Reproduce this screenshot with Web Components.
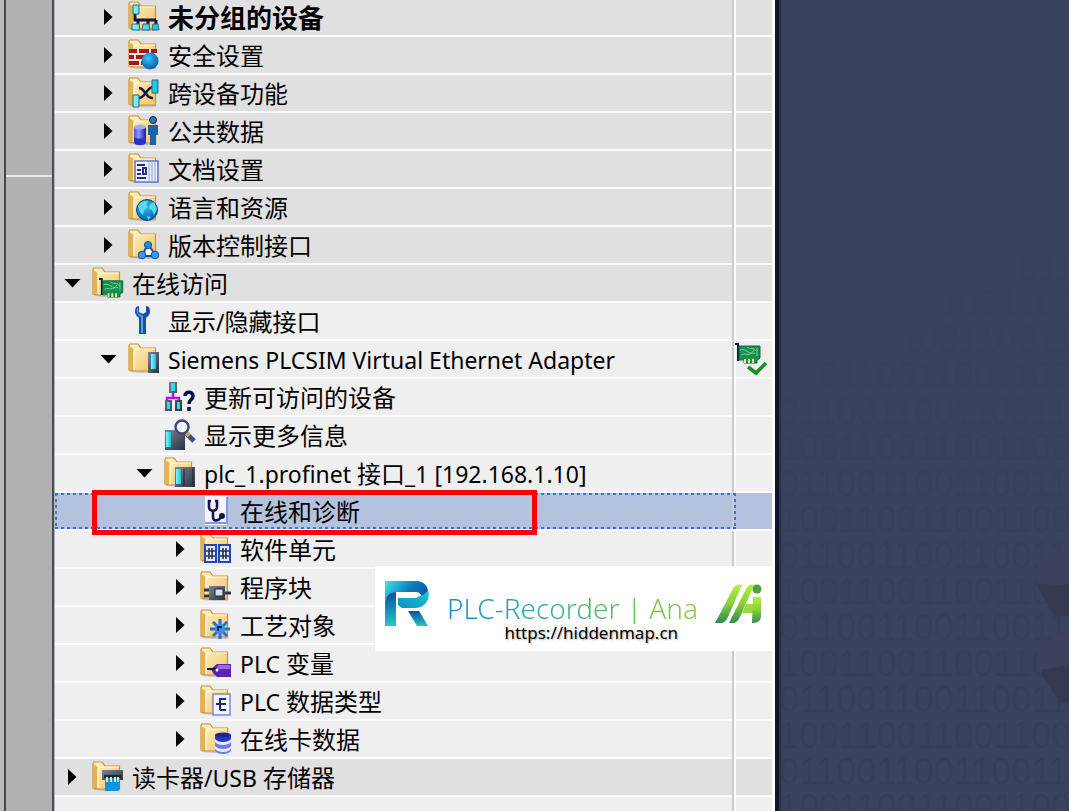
<!DOCTYPE html>
<html lang="zh-CN">
<head>
<meta charset="utf-8">
<title>项目树</title>
<style>
  body {
    margin: 0;
    font-family: "Noto Sans CJK SC", sans-serif;
    color: #000;
  }
</style>
</head>
<body>
<work-bench>
  <side-rail slot="rail"></side-rail>
  <project-tree slot="tree">
    <tree-row level="1" icon="devices" toggle="closed" group strong>未分组的设备</tree-row>
    <tree-row level="1" icon="security" toggle="closed" group>安全设置</tree-row>
    <tree-row level="1" icon="cross" toggle="closed" group>跨设备功能</tree-row>
    <tree-row level="1" icon="common" toggle="closed" group>公共数据</tree-row>
    <tree-row level="1" icon="docs" toggle="closed" group>文档设置</tree-row>
    <tree-row level="1" icon="globe" toggle="closed" group>语言和资源</tree-row>
    <tree-row level="1" icon="version" toggle="closed" group>版本控制接口</tree-row>
    <tree-row level="0" icon="online" toggle="open" group>在线访问</tree-row>
    <tree-row level="1" icon="wrench">显示<span>/</span>隐藏接口</tree-row>
    <tree-row level="1" icon="adapter" toggle="open"><span>Siemens PLCSIM Virtual Ethernet Adapter</span><tree-icon slot="status" name="adapter-ok"></tree-icon></tree-row>
    <tree-row level="2" icon="refresh">更新可访问的设备</tree-row>
    <tree-row level="2" icon="more">显示更多信息</tree-row>
    <tree-row level="2" icon="plc" toggle="open"><span>plc_1.profinet </span>接口<span>_1 [192.168.1.10]</span></tree-row>
    <tree-row level="3" icon="diagnose" selected marked>在线和诊断</tree-row>
    <tree-row level="3" icon="units" toggle="closed">软件单元</tree-row>
    <tree-row level="3" icon="blocks" toggle="closed">程序块</tree-row>
    <tree-row level="3" icon="tech" toggle="closed">工艺对象</tree-row>
    <tree-row level="3" icon="tags" toggle="closed"><span>PLC </span>变量</tree-row>
    <tree-row level="3" icon="types" toggle="closed"><span>PLC </span>数据类型</tree-row>
    <tree-row level="3" icon="carddata" toggle="closed">在线卡数据</tree-row>
    <tree-row level="0" icon="reader" toggle="closed" group>读卡器<span>/USB </span>存储器</tree-row>
    <tree-row level="0"></tree-row>
    <brand-badge slot="overlay" href="https://hiddenmap.cn">PLC-Recorder | Ana</brand-badge>
  </project-tree>
  <binary-backdrop slot="canvas"></binary-backdrop>
</work-bench>

<script>
const DEFS = `
  <defs>
    <linearGradient id="paper" x1="0" y1="0" x2="1" y2="1">
      <stop offset="0" stop-color="#fff3cb"/><stop offset="1" stop-color="#f0c561"/>
    </linearGradient>
    <linearGradient id="cyan" x1="0" y1="0" x2="1" y2="0">
      <stop offset="0" stop-color="#7ff6ff"/><stop offset="1" stop-color="#10c4dc"/>
    </linearGradient>
    <linearGradient id="steel" x1="0" y1="0" x2="1" y2="1">
      <stop offset="0" stop-color="#7b8899"/><stop offset="1" stop-color="#27313f"/>
    </linearGradient>
    <radialGradient id="ball" cx=".4" cy=".35" r=".7">
      <stop offset="0" stop-color="#35c3f5"/><stop offset="1" stop-color="#0559a8"/>
    </radialGradient>
    <linearGradient id="drum" x1="0" y1="0" x2="1" y2="0">
      <stop offset="0" stop-color="#4c58e8"/><stop offset=".4" stop-color="#8b98ff"/><stop offset="1" stop-color="#1414a8"/>
    </linearGradient>
  </defs>`;

const FOLDER = `
  <path d="M2 29V3l1-1h8l3 4h14v24H12z" fill="#8a93a8" opacity=".4"/>
  <path d="M1 27V2.500l1-1.500h8l3 4h14.500V28H6z" fill="url(#paper)" stroke="#c9922e" stroke-width="1.200"/>
  <path d="M1.500 27V3l4 3v21z" fill="#e6b24a"/>
  <path d="M6 27V8l2-2h19" fill="none" stroke="#fffbe8" stroke-width="1.200"/>`;

const NIC = `
  <path d="M0 1h3v17" fill="none" stroke="#11104f" stroke-width="2"/>
  <path d="M4 3h21v12l-3 2v3H9v-3H4z" fill="#149150" stroke="#0b6a3c"/>
  <path d="M5 7c7-2 8 5 15 3M6 12c5-3 8 3 13-5M12 4c3 3 7 0 9 4M22 5v8" fill="none" stroke="#7ed09a"/>
  <path d="M10 16v4M14 16v4M18 16v4" stroke="#f5e29a" stroke-width="2"/>`;

const ICONS = {
  devices: FOLDER + `
    <path d="M7 9v10h21M10 19v5M20 19v5M28 19v5" fill="none" stroke="#101448" stroke-width="3"/>
    <path d="M5 4h6v9H5zM4 23h7l1 6H4zM15 23h6l1 6h-8zM25 23h5l1 6h-7z" fill="url(#cyan)" stroke="#39617d"/>`,
  security: FOLDER + `
    <path d="M1 10h28v17H1z" fill="#f5ebe3"/>
    <path d="M1 10h8v4H1zM11 10h10v4H11zM23 10h6v4h-6zM1 16h5v4H1zM8 16h10v4H8zM1 22h10v4H1zM13 22h6v4h-6z" fill="#a81818"/>
    <circle cx="22" cy="22" r="8.500" fill="url(#ball)"/>`,
  cross: FOLDER + `
    <path d="M11 11c6 0 7 11 14 10M11 21c6 0 8-11 14-11" fill="none" stroke="#16144f" stroke-width="2.600"/>
    <path d="M5 18h6v12H5zM24 3h6v13h-6z" fill="url(#cyan)" stroke="#39617d"/>`,
  common: FOLDER + `
    <path d="M6 12v16c2 3 10 3 12 0V12z" fill="#2735cf"/>
    <path d="M6 12v10c2 2 10 2 12 0V12z" fill="url(#drum)"/>
    <ellipse cx="12" cy="12" rx="6" ry="2.500" fill="#a2acff"/>
    <circle cx="25" cy="5" r="3.500" fill="#2f78b8" stroke="#17175a"/>
    <path d="M20 10h10v10h-2v10h-6V20h-2z" fill="#1e629f"/>`,
  docs: FOLDER + `
    <path d="M7 8h23v21H7z" fill="#eef1ff" stroke="#6674cc" stroke-width="1.600"/>
    <path d="M9 12h8M9 17h4M9 21h4M9 25h9M15 15h3v6h-3z" stroke="#23307e" stroke-width="2" fill="none"/>
    <path d="M21 9v20M24 9v20M27 9v20" stroke="#8a98d6"/>`,
  globe: FOLDER + `
    <circle cx="19" cy="19" r="10.500" fill="url(#ball)" stroke="#0b4387"/>
    <path d="M10 15c4-6 8-5 10-5l-2 4 2 2-4 3-1 5-3-3zM22 13l4-2 3 7-3 6-2-5-3-1zM19 25l4 1-3 3z" fill="#55dcea"/>`,
  version: FOLDER + `
    <path d="M20 15l-6 12h14z" fill="#fff" stroke="#1750a0" stroke-width="2"/>
    <circle cx="20" cy="16" r="3.600" fill="#2d86dd" stroke="#13509e"/>
    <circle cx="14" cy="26" r="3.800" fill="#3d98ea" stroke="#13509e"/>
    <circle cx="27" cy="26" r="3.800" fill="#3d98ea" stroke="#13509e"/>`,
  online: FOLDER + `<g transform="translate(7 11) scale(.95)">${NIC}</g>`,
  wrench: `
    <path d="M8 2c-2 5-1 8 3 11v16h7V13c4-3 5-6 3-11l-3-1v6l-3 2-4-2V1z" fill="#1550a4"/>
    <path d="M9 3c-1 4 0 7 4 9v16h2V11l-5-3V3z" fill="#5f9be0"/>`,
  adapter: FOLDER + `
    <path d="M20 9h11v21H20z" fill="url(#steel)"/>
    <path d="M23 11h5v15h-5z" fill="url(#cyan)"/>`,
  refresh: `
    <path d="M9 11v5M3 22v-5h12v5" fill="none" stroke="#b512dd" stroke-width="2.500"/>
    <path d="M5 1h8v11H5zM1 19h7v11H1zM11 19h7v11h-7z" fill="url(#steel)"/>
    <path d="M7 2h4v8H7zM3 21h3v7H3zM13 21h3v7h-3z" fill="#1fe0ea"/>
    <path d="M21 15c0-5 8-5 8 0 0 4-4 3-4 8M25 26v4" fill="none" stroke="#0c0b4e" stroke-width="3.500"/>`,
  more: `
    <path d="M1 11h20v20H1z" fill="url(#steel)"/>
    <path d="M2 13h5v15H2z" fill="url(#cyan)"/>
    <path d="M22 14l8 8" stroke="#394f8c" stroke-width="5"/>
    <path d="M21 12l4 5" stroke="#eaa528" stroke-width="4"/>
    <circle cx="18" cy="8" r="6.500" fill="#f3f5ff" stroke="#434578" stroke-width="2.400"/>`,
  plc: FOLDER + `
    <path d="M11 10h20v20H11z" fill="url(#steel)"/>
    <path d="M12 12h5v15h-5z" fill="url(#cyan)"/>
    <path d="M20 12v17M29 11v17" stroke="#1a2230"/>`,
  diagnose: `
    <path d="M5 1h22v29H5z" fill="#f4f7ff"/>
    <path d="M5 28h22V2" fill="none" stroke="#7d99ec" stroke-width="2"/>
    <path d="M11 6H9v6c0 5 8 5 8 0V6h-2M13 16v6c0 5 6 4 8 0" fill="none" stroke="#15124f" stroke-width="2.600"/>
    <circle cx="22" cy="21" r="3" fill="#15124f"/>`,
  units: FOLDER + `
    <path d="M5 12h11v17H5zM19 12h11v17H19z" fill="#e3e8fb" stroke="#2544bd" stroke-width="2"/>
    <path d="M9 15v11M12 15v11M23 15v11M26 15v11M6 18h9M6 23h9M20 18h9M20 23h9" stroke="#29334f" stroke-width="1.600"/>`,
  blocks: FOLDER + `
    <path d="M4 19h6M4 25h6M23 22h8" stroke="#2a3547" stroke-width="3"/>
    <path d="M9 15h16v14H9z" fill="url(#steel)"/>
    <path d="M15 18h8v7h-8z" fill="#d9dfe8" stroke="#1d2637"/>`,
  tech: FOLDER + `
    <path d="M20 10v20M10 20h20M13 13l14 14M27 13L13 27" stroke="#1e6fe0" stroke-width="3"/>
    <circle cx="20" cy="20" r="5" fill="#3c8ff2"/>
    <path d="M18 22v-4h4" fill="none" stroke="#10204f" stroke-width="2"/>`,
  tags: FOLDER + `
    <path d="M11 22l6-5h14v13H17l-4-4z" fill="#5b22b5"/>
    <path d="M18 18h12v4H17z" fill="#9a6ae6"/>
    <path d="M7 22h9" stroke="#201050" stroke-width="2"/>
    <circle cx="17" cy="23" r="1.500" fill="#fff"/>`,
  types: FOLDER + `
    <path d="M13 9h17v21H13z" fill="#f4f6ff" stroke="#7788d8" stroke-width="1.500"/>
    <path d="M16 19h4M20 13v12M20 14h6M20 19h6M20 25h6" fill="none" stroke="#20286a" stroke-width="2"/>`,
  carddata: FOLDER + `
    <path d="M15 13v15c3 4 13 4 16 0V13z" fill="#e9ecff"/>
    <path d="M15 12v4c3 4 13 4 16 0v-4z" fill="#2638c4"/>
    <path d="M15 19c3 4 13 4 16 0v4c-3 4-13 4-16 0zM15 26c3 4 13 4 16 0v2c-3 4-13 4-16 0z" fill="#6b78f0"/>
    <ellipse cx="23" cy="12" rx="8" ry="2.500" fill="#1b2494"/>`,
  reader: FOLDER + `
    <path d="M10 9h21v10H10z" fill="url(#steel)"/>
    <path d="M12 14h17v3H12z" fill="#1c2535"/>
    <path d="M13 17h15v11l-2 2H13z" fill="#0c94dc"/>
    <path d="M15 16v5M19 16v5M23 16v5M26 16v5" stroke="#f3e4a4" stroke-width="2"/>`,
  'adapter-ok': `
    <g transform="translate(-1 2)">${NIC}</g>
    <path d="M12 26l8 6 10-10" fill="none" stroke="#169022" stroke-width="3.600"/>`
};

class TreeIcon extends HTMLElement {
  constructor() {
    super();
    this.attachShadow({ mode: 'open' });
  }

  connectedCallback() {
    this.shadowRoot.innerHTML = `
      <style>
        :host { display: block; width: 32px; height: 32px; }
        svg { display: block; width: 32px; height: 32px; overflow: visible; }
      </style>
      <svg viewBox="0 0 32 32" aria-hidden="true">${DEFS}${ICONS[this.getAttribute('name')] || ''}</svg>
    `;
  }
}

class TreeRow extends HTMLElement {
  constructor() {
    super();
    this.attachShadow({ mode: 'open' });
  }

  connectedCallback() {
    this.setAttribute('role', 'treeitem');
    this.render();
    const button = this.shadowRoot.querySelector('button');
    if (button) {
      button.addEventListener('click', () => {
        const open = this.getAttribute('toggle') === 'open';
        this.setAttribute('toggle', open ? 'closed' : 'open');
        button.className = this.getAttribute('toggle');
      });
    }
  }

  render() {
    const toggle = this.getAttribute('toggle');
    const icon = this.getAttribute('icon');
    this.shadowRoot.innerHTML = `
      <style>
        :host {
          --fill: #efefef;
          display: grid;
          grid-template-columns: minmax(0, 1fr) 4px 36px;
          position: relative;
          height: 38px;
          background: #fcfcfc;
          font-size: 24px;
          line-height: 36px;
        }
        :host([group]) { --fill: #e0e0e0; }
        :host([selected]) { --fill: #b4c2de; z-index: 1; }
        :host([strong]) { font-size: 26px; font-weight: 700; }
        .main, .status {
          height: 36px;
          background: var(--fill);
        }
        .main {
          display: grid;
          grid-template-columns: 16px 32px 1fr;
          column-gap: 8px;
          align-items: center;
          padding-left: calc(9px + var(--level) * 36px);
        }
        .main tree-icon { margin-left: 4px; }
        .label {
          height: 36px;
          padding-left: 4px;
          white-space: pre;
        }
        ::slotted(span) {
          font-family: "Noto Sans", sans-serif;
          font-size: 23px;
        }
        .line { border-left: 2px solid #cbcbcb; }
        :host([selected]) .line { background: var(--fill); height: 36px; }
        button {
          display: grid;
          place-items: center;
          width: 16px;
          height: 24px;
          padding: 0;
          border: 0;
          background: none;
        }
        button::before {
          content: "";
          width: 9px;
          height: 17px;
          background: #000;
          clip-path: polygon(0 0, 100% 50%, 0 100%);
        }
        button.open::before {
          width: 17px;
          height: 9px;
          clip-path: polygon(0 0, 100% 0, 50% 100%);
        }
        .focus {
          position: absolute;
          inset: 0 36px 2px 0;
          background:
            repeating-linear-gradient(90deg, #3f70d6 0 3px, transparent 3px 6px) top / 100% 2px no-repeat,
            repeating-linear-gradient(90deg, #3f70d6 0 3px, transparent 3px 6px) bottom / 100% 2px no-repeat,
            repeating-linear-gradient(#3f70d6 0 3px, transparent 3px 6px) left / 2px 100% no-repeat,
            repeating-linear-gradient(#3f70d6 0 3px, transparent 3px 6px) right / 2px 100% no-repeat;
        }
        .mark {
          position: absolute;
          left: 37px;
          top: -3px;
          box-sizing: border-box;
          width: 445px;
          height: 45px;
          border: 5px solid #fb0007;
        }
      </style>
      <div class="main" style="--level: ${this.getAttribute('level')}">
        ${toggle ? `<button class="${toggle}" aria-label="展开或折叠"></button>` : '<i></i>'}
        ${icon ? `<tree-icon name="${icon}"></tree-icon>` : '<i></i>'}
        <div class="label"><slot></slot></div>
      </div>
      <div class="line"></div>
      <div class="status"><slot name="status"></slot></div>
      ${this.hasAttribute('selected') ? '<div class="focus"></div>' : ''}
      ${this.hasAttribute('marked') ? '<div class="mark"></div>' : ''}
    `;
  }
}

class ProjectTree extends HTMLElement {
  constructor() {
    super();
    this.attachShadow({ mode: 'open' });
  }

  connectedCallback() {
    this.shadowRoot.innerHTML = `
      <style>
        :host {
          display: block;
          position: relative;
          overflow: hidden;
          padding-right: 3px;
          background: #fcfcfc;
        }
        .rows { margin-top: -1px; }
        ::slotted(brand-badge) {
          position: absolute;
          top: 566px;
          right: 3px;
          z-index: 2;
        }
      </style>
      <div class="rows" role="tree"><slot></slot></div>
      <slot name="overlay"></slot>
    `;
  }
}

class BrandBadge extends HTMLElement {
  constructor() {
    super();
    this.attachShadow({ mode: 'open' });
  }

  connectedCallback() {
    const href = this.getAttribute('href');
    this.shadowRoot.innerHTML = `
      <style>
        :host {
          display: flex;
          align-items: flex-start;
          justify-content: space-between;
          box-sizing: border-box;
          width: 397px;
          height: 85px;
          padding: 14px 9px 0 9px;
          background: #fff;
          font-family: "Noto Sans", sans-serif;
        }
        svg { display: block; }
        .text {
          display: flex;
          flex-direction: column;
          align-items: flex-end;
          padding-top: 12px;
        }
        .title {
          font-size: 28px;
          font-weight: 300;
          line-height: 32px;
          background: linear-gradient(90deg, #0f8fd0, #3fae8c 45%, #8cc83c);
          background-clip: text;
          -webkit-background-clip: text;
          color: transparent;
        }
        a {
          padding-right: 20px;
          font-size: 17px;
          line-height: 18px;
          color: #000;
          text-decoration: none;
          text-shadow: 1px 1px 2px #aaa;
        }
      </style>
      <svg width="46" height="48" viewBox="0 0 46 48" aria-hidden="true">
        <defs>
          <linearGradient id="top" x1="0" y1="0" x2="1" y2=".4">
            <stop offset="0" stop-color="#3fe8dc"/><stop offset=".6" stop-color="#0a7fc0"/><stop offset="1" stop-color="#0a5ca8"/>
          </linearGradient>
          <linearGradient id="stem" x1="0" y1="0" x2="0" y2="1">
            <stop offset="0" stop-color="#064f9e"/><stop offset="1" stop-color="#27c8c4"/>
          </linearGradient>
          <linearGradient id="bowl" x1="0" y1="1" x2="1" y2="0">
            <stop offset="0" stop-color="#0a8fca"/><stop offset="1" stop-color="#25c9c4"/>
          </linearGradient>
        </defs>
        <path d="M1 1h31c8 0 12 5 12 11 0 4-2 6-6 8 0-5-2-8-6-8H12C6 12 2 15 1 22z" fill="url(#top)"/>
        <path d="M1 46V22c1-7 5-10 11-10v34z" fill="url(#stem)"/>
        <path d="M14 17h16c7 0 12-3 14-7 3 9-3 18-13 18H18l-4-3z" fill="url(#bowl)"/>
        <path d="M13 12h18q3 0 3 3t-3 3H14z" fill="#fff"/>
        <path d="M24 31h11l9 15H33z" fill="url(#stem)"/>
      </svg>
      <div class="text">
        <div class="title"><slot></slot></div>
        <a href="${href}">${href}</a>
      </div>
      <svg width="48" height="48" viewBox="0 0 48 48" aria-hidden="true">
        <defs>
          <linearGradient id="leaf" x1="0" y1="0" x2="0" y2="1">
            <stop offset="0" stop-color="#b5f03c"/><stop offset=".5" stop-color="#86cf3c"/><stop offset="1" stop-color="#2d8c50"/>
          </linearGradient>
        </defs>
        <path d="M0 43L18 9q3-6 9-4L13 37q-3 6-7 6z" fill="url(#leaf)"/>
        <path d="M14 43L31 9q3-6 8-4L25 37q-3 6-7 6z" fill="url(#leaf)"/>
        <path d="M31 24h9v9H27z" fill="#9ad940"/>
        <path d="M38 17q8-1 8 1v19q-1 6-9 6z" fill="url(#leaf)"/>
        <circle cx="42" cy="9" r="4.500" fill="#4da33c"/>
      </svg>
    `;
  }
}

class SideRail extends HTMLElement {
  constructor() {
    super();
    this.attachShadow({ mode: 'open' });
  }

  connectedCallback() {
    this.shadowRoot.innerHTML = `
      <style>
        :host {
          display: block;
          box-sizing: border-box;
          border-left: 4px solid #b9b9b9;
          border-right: 1px solid #b9b9b9;
        }
        .frame {
          box-sizing: border-box;
          height: 100%;
          border-left: 2px solid #484848;
          border-right: 2px solid #454c60;
          background: #b1b1b1;
        }
        .top { height: 175px; border-bottom: 2px solid #e9e9e9; }
      </style>
      <div class="frame">
        <div class="top"></div>
      </div>
    `;
  }
}

class BinaryBackdrop extends HTMLElement {
  constructor() {
    super();
    this.attachShadow({ mode: 'open' });
  }

  // the upper lines start further to the right; two spaces are as wide as one digit
  lines() {
    const skips = [12, 8, 6, 2];
    const lines = [];
    for (let i = 0; i < 16; i++) {
      const skip = skips[i] || 0;
      const digits = (i % 2 ? '1001' : '0110').repeat(4).slice(skip, 15);
      lines.push('  '.repeat(skip) + digits);
    }
    return lines.join('\n');
  }

  render() {
    this.shadowRoot.innerHTML = `
      <style>
        :host {
          display: block;
          position: relative;
          overflow: hidden;
          box-sizing: border-box;
          border-left: 4px solid #12172a;
          box-shadow: inset 2px 0 1px #2a3249;
          background: #3a435e;
        }
        pre {
          margin: 250px 0 0;
          font: 36px/36px "Liberation Sans", sans-serif;
          background: linear-gradient(#39415c, #384059 50%, #363d57);
          background-clip: text;
          -webkit-background-clip: text;
          color: transparent;
        }
        svg {
          position: absolute;
          right: 0;
          top: 540px;
        }
      </style>
      <pre aria-hidden="true">${this.lines()}</pre>
      <svg width="36" height="170" viewBox="0 0 36 170" aria-hidden="true">
        <path d="M7 19l29-12v38H3z" fill="#3c425d"/>
        <path d="M3 44l33 1v31H21z" fill="#353952"/>
        <path d="M3 108l33-20v42L10 131z" fill="#3c425d"/>
        <path d="M8 130l28-5v38h-8L10 137z" fill="#353952"/>
      </svg>
    `;
  }

  connectedCallback() {
    this.render();
  }
}

class WorkBench extends HTMLElement {
  constructor() {
    super();
    this.attachShadow({ mode: 'open' });
  }

  connectedCallback() {
    this.shadowRoot.innerHTML = `
      <style>
        :host {
          display: grid;
          grid-template-columns: 55px minmax(0, 1fr) 294px;
          grid-template-rows: 100%;
          height: 100vh;
          overflow: hidden;
        }
      </style>
      <slot name="rail"></slot>
      <slot name="tree"></slot>
      <slot name="canvas"></slot>
    `;
  }
}

customElements.define('tree-icon', TreeIcon);
customElements.define('tree-row', TreeRow);
customElements.define('project-tree', ProjectTree);
customElements.define('brand-badge', BrandBadge);
customElements.define('side-rail', SideRail);
customElements.define('binary-backdrop', BinaryBackdrop);
customElements.define('work-bench', WorkBench);
</script>
</body>
</html>
